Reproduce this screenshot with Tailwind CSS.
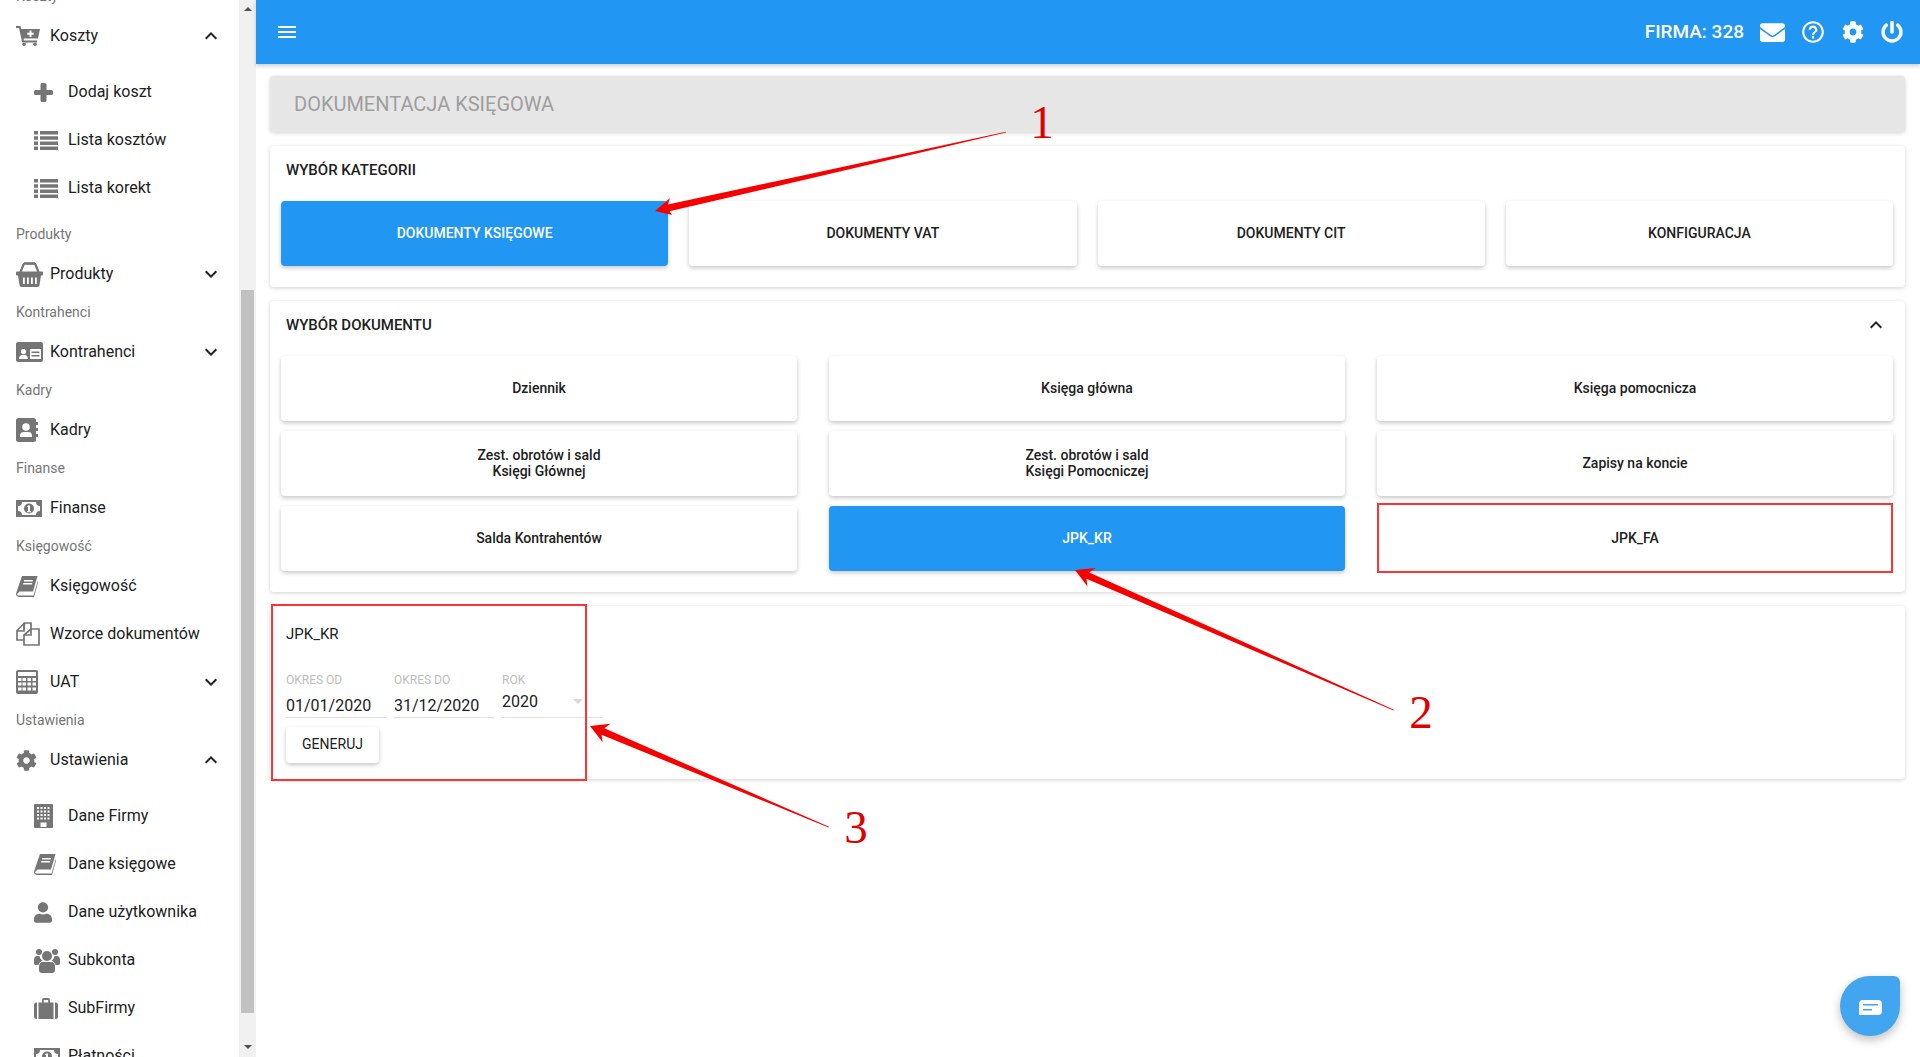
<!DOCTYPE html>
<html lang="pl">
<head>
<meta charset="UTF-8">
<meta name="viewport" content="width=device-width, initial-scale=1.0">
<title>Dokumentacja księgowa</title>
<script src="https://cdn.jsdelivr.net/npm/@tailwindcss/browser@4"></script>
</head>
<body class="relative h-[1057px] overflow-hidden bg-white font-['Roboto',sans-serif] text-[#212121]">
<div class="flex h-[1057px]">

  <!-- sidebar -->
  <aside class="flex w-[256px] shrink-0">
    <nav class="w-[239px] shrink-0 overflow-hidden bg-white text-base text-[#212121]">
      <div class="-mt-[19px]">
        <div class="flex h-[30px] items-center pl-4 text-sm text-[#757575]">Koszty</div>

        <div class="flex h-12 items-center pl-4 pt-[2px]">
          <span class="flex w-[34px] shrink-0"><svg width="24" height="20" viewBox="0 0 24 20" fill="#757575"><path d="M0 0h4.500l.8 3H24l-2 9.500H7.500l.4 2H21v2H6.200L3 2H0z"/><circle cx="8" cy="18.200" r="1.800"/><circle cx="19" cy="18.200" r="1.800"/><path fill="#fff" d="M13.500 4.500h2v2.200h2.200v2h-2.200v2.200h-2V8.700h-2.200v-2h2.200z"/></svg></span>
          <span>Koszty</span>
          <svg class="ml-auto mr-4" width="24" height="24" viewBox="0 0 24 24" fill="#212121"><path d="M12 8l-6 6 1.410 1.410L12 10.830l4.590 4.580L18 14z"/></svg>
        </div>
        <div class="py-2">
          <div class="flex h-12 items-center pl-[34px] pt-[2px]">
            <span class="flex w-[34px] shrink-0"><svg width="19" height="19" viewBox="0 0 19 19" fill="#757575"><path d="M8 0h3a1.500 1.500 0 0 1 1.500 1.500v5.500H17.500A1.500 1.500 0 0 1 19 8.500v2a1.500 1.500 0 0 1-1.500 1.500H12.500v5.500A1.500 1.500 0 0 1 11 19H8a1.500 1.500 0 0 1-1.500-1.500V12H1.500A1.500 1.500 0 0 1 0 10.500v-2A1.500 1.500 0 0 1 1.500 7H6.500V1.500A1.500 1.500 0 0 1 8 0z"/></svg></span>
            <span>Dodaj koszt</span>
          </div>
          <div class="flex h-12 items-center pl-[34px] pt-[2px]">
            <span class="flex w-[34px] shrink-0"><svg width="24" height="19" viewBox="0 0 24 19" fill="#757575"><path d="M0 0h4v3.500H0zM6 0h18v3.500H6zM0 5.200h4v3.500H0zM6 5.200h18v3.500H6zM0 10.400h4v3.500H0zM6 10.400h18v3.500H6zM0 15.500h4V19H0zM6 15.500h18V19H6z"/></svg></span>
            <span>Lista kosztów</span>
          </div>
          <div class="flex h-12 items-center pl-[34px] pt-[2px]">
            <span class="flex w-[34px] shrink-0"><svg width="24" height="19" viewBox="0 0 24 19" fill="#757575"><path d="M0 0h4v3.500H0zM6 0h18v3.500H6zM0 5.200h4v3.500H0zM6 5.200h18v3.500H6zM0 10.400h4v3.500H0zM6 10.400h18v3.500H6zM0 15.500h4V19H0zM6 15.500h18V19H6z"/></svg></span>
            <span>Lista korekt</span>
          </div>
        </div>

        <div class="flex h-[30px] items-center pl-4 text-sm text-[#757575]">Produkty</div>
        <div class="flex h-12 items-center pl-4 pt-[2px]">
          <span class="flex w-[34px] shrink-0"><svg width="27" height="25" viewBox="0 0 27 25" fill="#757575"><path d="M4.500 10l3-7.500a1.500 1.500 0 0 1 1.500-1h9a1.500 1.500 0 0 1 1.500 1l3 7.500" fill="none" stroke="#757575" stroke-width="2.200"/><path d="M8 .3h11v2.400H8z"/><path d="M1 9.500h25a1 1 0 0 1 1 1v2a1 1 0 0 1-1 1H1a1 1 0 0 1-1-1v-2a1 1 0 0 1 1-1zM2 13.500h23L23.500 23a2 2 0 0 1-2 2h-16a2 2 0 0 1-2-2z"/><path fill="#fff" d="M7 15.500h1.800V22H7zM11 15.500h1.800V22H11zM15 15.500h1.800V22H15zM19 15.500h1.800V22H19z"/></svg></span>
          <span>Produkty</span>
          <svg class="ml-auto mr-4" width="24" height="24" viewBox="0 0 24 24" fill="#212121"><path d="M16.590 8.590L12 13.170 7.410 8.590 6 10l6 6 6-6z"/></svg>
        </div>

        <div class="flex h-[30px] items-center pl-4 text-sm text-[#757575]">Kontrahenci</div>
        <div class="flex h-12 items-center pl-4 pt-[2px]">
          <span class="flex w-[34px] shrink-0"><svg width="27" height="20" viewBox="0 0 27 20"><rect width="27" height="20" rx="2" fill="#757575"/><circle cx="7.500" cy="9.500" r="2.600" fill="#fff"/><path d="M3 17c0-3 2-4.300 4.500-4.300S12 14 12 17z" fill="#fff"/><path d="M14 7h11v10H14z" fill="#fff"/><path d="M15.500 9.500h8v1.500h-8zM15.500 13h8v1.500h-8z" fill="#757575"/></svg></span>
          <span>Kontrahenci</span>
          <svg class="ml-auto mr-4" width="24" height="24" viewBox="0 0 24 24" fill="#212121"><path d="M16.590 8.590L12 13.170 7.410 8.590 6 10l6 6 6-6z"/></svg>
        </div>

        <div class="flex h-[30px] items-center pl-4 text-sm text-[#757575]">Kadry</div>
        <div class="flex h-12 items-center pl-4 pt-[2px]">
          <span class="flex w-[34px] shrink-0"><svg width="22" height="24" viewBox="0 0 22 24"><rect width="20" height="24" rx="2.500" fill="#757575"/><path d="M20 4h2v3h-2zM20 10h2v3h-2zM20 16h2v3h-2z" fill="#757575"/><circle cx="10" cy="9" r="3.800" fill="#fff"/><path d="M4 19v-1.500C4 15 6 14 7.500 14h5c1.500 0 3.500 1 3.500 3.500V19z" fill="#fff"/></svg></span>
          <span>Kadry</span>
        </div>

        <div class="flex h-[30px] items-center pl-4 text-sm text-[#757575]">Finanse</div>
        <div class="flex h-12 items-center pl-4 pt-[2px]">
          <span class="flex w-[34px] shrink-0"><svg width="26" height="17" viewBox="0 0 26 17"><rect width="26" height="17" fill="#757575"/><path d="M6 2h14a4 4 0 0 0 4 4v5a4 4 0 0 0-4 4H6a4 4 0 0 0-4-4V6a4 4 0 0 0 4-4z" fill="#fff"/><circle cx="13" cy="8.500" r="5" fill="#757575"/><path d="M12 5.500h2V11h1v1.300h-4V11h1V7h-1z" fill="#fff"/></svg></span>
          <span>Finanse</span>
        </div>

        <div class="flex h-[30px] items-center pl-4 text-sm text-[#757575]">Księgowość</div>
        <div class="flex h-12 items-center pl-4 pt-[2px]">
          <span class="flex w-[34px] shrink-0"><svg width="22" height="21" viewBox="0 0 22 21"><path d="M6 0h15.500L17 15.500H3.500L1 18a2 2 0 0 0 2 1.500h14.500l4.500-15v2L18 21H3.500C1 21-.5 19 .2 17z" fill="#757575"/><path d="M8 4h9v1.500H8zM7.200 7h9v1.500h-9z" fill="#fff"/></svg></span>
          <span>Księgowość</span>
        </div>
        <div class="flex h-12 items-center pl-4 pt-[2px]">
          <span class="flex w-[34px] shrink-0"><svg width="24" height="24" viewBox="0 0 24 24" fill="none" stroke="#757575" stroke-width="1.700"><path d="M8 7.500L8.500 1H15v6"/><path d="M8.500 1L1 8.500V18h7"/><path d="M1 9h7V2"/><path d="M15 7h8v16H8V13z"/><path d="M8 13h7V7"/></svg></span>
          <span>Wzorce dokumentów</span>
        </div>
        <div class="flex h-12 items-center pl-4 pt-[2px]">
          <span class="flex w-[34px] shrink-0"><svg width="22" height="24" viewBox="0 0 22 24"><rect width="22" height="24" rx="2" fill="#757575"/><path d="M2 2h18v4H2z" fill="#fff"/><path d="M2 8h3.500v3H2zM6.500 8H10v3H6.500zM11.500 8H15v3h-3.500zM16.500 8H20v3h-3.500zM2 12.500h3.500v3H2zM6.500 12.500H10v3H6.500zM11.500 12.500H15v3h-3.500zM16.500 12.500H20v3h-3.500zM2 17.500h3.500v3H2zM6.500 17.500H10v3H6.500zM11.500 17.500H15v3h-3.500zM16.500 17.500H20v3h-3.500z" fill="#fff"/></svg></span>
          <span>UAT</span>
          <svg class="ml-auto mr-4" width="24" height="24" viewBox="0 0 24 24" fill="#212121"><path d="M16.590 8.590L12 13.170 7.410 8.590 6 10l6 6 6-6z"/></svg>
        </div>

        <div class="flex h-[30px] items-center pl-4 text-sm text-[#757575]">Ustawienia</div>
        <div class="flex h-12 items-center pl-4 pt-[2px]">
          <span class="flex w-[34px] shrink-0"><svg width="21" height="21" viewBox="0 0 512 512" fill="#757575"><path d="M487.400 315.700l-42.600-24.600c4.300-23.200 4.300-47 0-70.200l42.600-24.600c4.900-2.800 7.100-8.600 5.500-14-11.100-35.600-30-67.800-54.700-94.600-3.800-4.100-10-5.100-14.800-2.300L380.800 110c-17.900-15.400-38.500-27.300-60.800-35.100V25.800c0-5.600-3.900-10.500-9.400-11.700-36.700-8.200-74.300-7.800-109.200 0-5.500 1.200-9.400 6.100-9.400 11.700V75c-22.200 7.900-42.800 19.800-60.800 35.100L88.700 85.500c-4.900-2.800-11-1.900-14.800 2.300-24.700 26.700-43.600 58.900-54.700 94.600-1.700 5.400.6 11.200 5.500 14L67.300 221c-4.300 23.200-4.300 47 0 70.200l-42.600 24.600c-4.900 2.800-7.100 8.600-5.500 14 11.100 35.600 30 67.800 54.700 94.600 3.800 4.100 10 5.100 14.800 2.300l42.600-24.600c17.900 15.400 38.500 27.300 60.800 35.100v49.200c0 5.600 3.900 10.500 9.400 11.700 36.700 8.200 74.300 7.800 109.200 0 5.500-1.200 9.400-6.100 9.400-11.700v-49.200c22.200-7.900 42.800-19.800 60.800-35.100l42.600 24.600c4.900 2.800 11 1.900 14.800-2.300 24.700-26.700 43.600-58.900 54.700-94.600 1.500-5.500-.7-11.300-5.600-14.100zM256 336c-44.100 0-80-35.900-80-80s35.900-80 80-80 80 35.900 80 80-35.900 80-80 80z"/></svg></span>
          <span>Ustawienia</span>
          <svg class="ml-auto mr-4" width="24" height="24" viewBox="0 0 24 24" fill="#212121"><path d="M12 8l-6 6 1.410 1.410L12 10.830l4.590 4.580L18 14z"/></svg>
        </div>
        <div class="py-2">
          <div class="flex h-12 items-center pl-[34px] pt-[2px]">
            <span class="flex w-[34px] shrink-0"><svg width="19" height="24" viewBox="0 0 19 24"><rect width="19" height="24" rx="1" fill="#757575"/><path d="M3 3h2v2H3zM6.500 3h2v2h-2zM10 3h2v2h-2zM13.500 3h2v2h-2zM3 6.500h2v2H3zM6.500 6.500h2v2h-2zM10 6.500h2v2h-2zM13.500 6.500h2v2h-2zM3 10h2v2H3zM6.500 10h2v2h-2zM10 10h2v2h-2zM13.500 10h2v2h-2zM3 13.500h2v2H3zM6.500 13.500h2v2h-2zM10 13.500h2v2h-2zM13.500 13.500h2v2h-2zM6.500 18.500h6V23h-6z" fill="#fff"/></svg></span>
            <span>Dane Firmy</span>
          </div>
          <div class="flex h-12 items-center pl-[34px] pt-[2px]">
            <span class="flex w-[34px] shrink-0"><svg width="22" height="21" viewBox="0 0 22 21"><path d="M6 0h15.500L17 15.500H3.500L1 18a2 2 0 0 0 2 1.500h14.500l4.500-15v2L18 21H3.500C1 21-.5 19 .2 17z" fill="#757575"/><path d="M8 4h9v1.500H8zM7.200 7h9v1.500h-9z" fill="#fff"/></svg></span>
            <span>Dane księgowe</span>
          </div>
          <div class="flex h-12 items-center pl-[34px] pt-[2px]">
            <span class="flex w-[34px] shrink-0"><svg width="18" height="21" viewBox="0 0 448 512" fill="#757575"><path d="M224 256c70.700 0 128-57.300 128-128S294.700 0 224 0 96 57.300 96 128s57.300 128 128 128zm89.600 32h-16.700c-22.200 10.200-46.900 16-72.900 16s-50.600-5.800-72.900-16h-16.700C60.200 288 0 348.200 0 422.400V464c0 26.500 21.500 48 48 48h352c26.500 0 48-21.500 48-48v-41.600c0-74.200-60.200-134.400-134.400-134.400z"/></svg></span>
            <span>Dane użytkownika</span>
          </div>
          <div class="flex h-12 items-center pl-[34px] pt-[2px]">
            <span class="flex w-[34px] shrink-0"><svg width="26" height="25" viewBox="0 0 26 25" fill="#757575"><circle cx="5" cy="4" r="3"/><circle cx="21" cy="4" r="3"/><circle cx="13" cy="8" r="5"/><path d="M0 12c0-2 1-4 3-4h2.500c.4 2 1.500 3.500 3 4.500C6.500 13.500 5 15 4.500 17H1.500C.5 17 0 16 0 15zM26 12c0-2-1-4-3-4h-2.500c-.4 2-1.500 3.500-3 4.500 2 1 3.500 2.500 4 4.500h3c1 0 1.500-1 1.500-2zM9 14h8c2.500 0 4 2 4 4.500V22a3 3 0 0 1-3 3H8a3 3 0 0 1-3-3v-3.500C5 16 6.500 14 9 14z"/></svg></span>
            <span>Subkonta</span>
          </div>
          <div class="flex h-12 items-center pl-[34px] pt-[2px]">
            <span class="flex w-[34px] shrink-0"><svg width="24" height="21" viewBox="0 0 24 21" fill="#757575"><path d="M0 7a2.500 2.500 0 0 1 2.500-2.500H3V21h-.5A2.500 2.500 0 0 1 0 18.500zM24 7a2.500 2.500 0 0 0-2.500-2.500H21V21h.5a2.500 2.500 0 0 0 2.500-2.500zM8 4.500V2a2 2 0 0 1 2-2h4a2 2 0 0 1 2 2v2.500h3.500V21h-15V4.500zM9.800 4.500h4.400V2H9.800z"/></svg></span>
            <span>SubFirmy</span>
          </div>
          <div class="flex h-12 items-center pl-[34px] pt-[2px]">
            <span class="flex w-[34px] shrink-0"><svg width="26" height="17" viewBox="0 0 26 17"><rect width="26" height="17" fill="#757575"/><path d="M6 2h14a4 4 0 0 0 4 4v5a4 4 0 0 0-4 4H6a4 4 0 0 0-4-4V6a4 4 0 0 0 4-4z" fill="#fff"/><circle cx="13" cy="8.500" r="5" fill="#757575"/><path d="M12 5.500h2V11h1v1.300h-4V11h1V7h-1z" fill="#fff"/></svg></span>
            <span>Płatności</span>
          </div>
        </div>
      </div>
    </nav>

    <!-- scrollbar -->
    <div class="flex w-[17px] shrink-0 flex-col items-center bg-[#f1f1f1]">
      <svg class="mt-[7px]" width="8" height="4" viewBox="0 0 8 4" fill="#505050"><path d="M0 4l4-4 4 4z"/></svg>
      <div class="mt-[279px] h-[723px] w-[13px] bg-[#c1c1c1]"></div>
      <svg class="mt-[32px]" width="8" height="4" viewBox="0 0 8 4" fill="#505050"><path d="M0 0l4 4 4-4z"/></svg>
    </div>
  </aside>

  <!-- main -->
  <div class="flex min-w-0 flex-1 flex-col bg-white">
    <header class="z-10 flex h-16 shrink-0 items-center bg-[#2196f3] pl-[19px] pr-[17px] text-white shadow-[0_2px_4px_rgba(0,0,0,0.2)]">
      <svg width="24" height="24" viewBox="0 0 24 24" fill="#fff"><path d="M3 18h18v-2H3v2zm0-5h18v-2H3v2zm0-7v2h18V6H3z"/></svg>
      <span class="ml-auto text-[19px] font-medium">FIRMA: 328</span>
      <svg class="ml-[16px]" width="25" height="25" viewBox="0 0 512 512" fill="#fff"><path d="M502.300 190.800c3.900-3.100 9.700-.2 9.700 4.700V400c0 26.500-21.500 48-48 48H48c-26.500 0-48-21.500-48-48V195.600c0-5 5.700-7.800 9.700-4.700 22.400 17.400 52.100 39.500 154.100 113.600 21.100 15.400 56.700 47.800 92.200 47.600 35.700.3 72-32.800 92.300-47.600 102-74.100 131.600-96.300 154-113.700zM256 320c23.200.4 56.600-29.200 73.400-41.400 132.700-96.300 142.800-104.700 173.400-128.700 5.800-4.500 9.200-11.500 9.200-18.900v-19c0-26.500-21.500-48-48-48H48C21.500 64 0 85.500 0 112v19c0 7.400 3.400 14.300 9.200 18.900 30.600 23.900 40.700 32.400 173.400 128.700 16.800 12.200 50.200 41.800 73.400 41.400z"/></svg>
      <svg class="ml-[15px]" width="26" height="26" viewBox="0 0 24 24" fill="#fff"><path d="M11 18h2v-2h-2v2zm1-16C6.480 2 2 6.480 2 12s4.480 10 10 10 10-4.480 10-10S17.520 2 12 2zm0 18c-4.410 0-8-3.590-8-8s3.590-8 8-8 8 3.590 8 8-3.590 8-8 8zm0-14c-2.210 0-4 1.790-4 4h2c0-1.100.9-2 2-2s2 .9 2 2c0 2-3 1.750-3 5h2c0-2.250 3-2.500 3-5 0-2.210-1.790-4-4-4z"/></svg>
      <svg class="ml-[16px]" width="22" height="22" viewBox="0 0 512 512" fill="#fff"><path d="M487.400 315.700l-42.600-24.600c4.300-23.200 4.300-47 0-70.200l42.600-24.600c4.900-2.800 7.100-8.600 5.500-14-11.100-35.600-30-67.800-54.700-94.600-3.800-4.100-10-5.100-14.800-2.300L380.800 110c-17.900-15.400-38.500-27.300-60.800-35.100V25.800c0-5.600-3.900-10.500-9.400-11.700-36.700-8.200-74.300-7.800-109.200 0-5.500 1.200-9.400 6.100-9.400 11.700V75c-22.200 7.900-42.800 19.800-60.800 35.100L88.700 85.500c-4.900-2.800-11-1.900-14.800 2.300-24.700 26.700-43.600 58.900-54.700 94.600-1.700 5.400.6 11.200 5.500 14L67.300 221c-4.300 23.200-4.300 47 0 70.200l-42.600 24.600c-4.900 2.800-7.100 8.600-5.500 14 11.100 35.600 30 67.800 54.700 94.600 3.800 4.100 10 5.100 14.800 2.300l42.600-24.600c17.900 15.400 38.500 27.300 60.800 35.100v49.200c0 5.600 3.900 10.500 9.400 11.700 36.700 8.200 74.300 7.800 109.200 0 5.500-1.200 9.400-6.100 9.400-11.700v-49.200c22.200-7.900 42.800-19.800 60.800-35.100l42.600 24.600c4.900 2.800 11 1.900 14.800-2.300 24.700-26.700 43.600-58.900 54.700-94.600 1.500-5.500-.7-11.300-5.600-14.100zM256 336c-44.100 0-80-35.900-80-80s35.900-80 80-80 80 35.900 80 80-35.900 80-80 80z"/></svg>
      <svg class="ml-[17px]" width="22" height="24" viewBox="0 0 512 512" fill="#fff"><path d="M400 54.100c63 45 104 118.600 104 201.900 0 136.800-110.800 247.700-247.500 248C120 504.300 8.200 393 8 256.400 7.900 173.100 48.900 99.300 111.800 54.200c11.700-8.300 28-4.800 35 7.700L162.600 90c5.900 10.500 3.100 23.800-6.600 31-41.500 30.800-68 79.600-68 134.900-.1 92.300 74.500 168.100 168 168.100 91.600 0 168.600-74.200 168-169.100-.3-51.800-24.700-101.800-68.100-134-9.700-7.200-12.400-20.500-6.500-30.900l15.800-28.100c7-12.400 23.200-16.100 34.800-7.800zM296 264V24c0-13.300-10.700-24-24-24h-32c-13.300 0-24 10.700-24 24v240c0 13.300 10.700 24 24 24h32c13.300 0 24-10.700 24-24z"/></svg>
    </header>

    <main class="flex flex-col gap-[14px] pl-[14px] pr-[15px] pt-3">
      <div class="flex h-14 items-center rounded bg-[#e6e6e6] pl-6 text-xl text-[#9e9e9e] shadow-[0_1px_4px_rgba(0,0,0,0.18)]">DOKUMENTACJA KSIĘGOWA</div>

      <section class="rounded bg-white pb-[21px] shadow-[0_1px_4px_rgba(0,0,0,0.18)]">
        <div class="flex h-[55px] items-center pb-[6px] pl-4 text-[15px] font-medium">WYBÓR KATEGORII</div>
        <div class="grid grid-cols-4 gap-x-[21px] pl-[11px] pr-3 text-sm font-medium">
          <div class="flex h-[65px] items-center justify-center rounded bg-[#2196f3] pb-px text-white shadow-[0_2px_4px_rgba(0,0,0,0.22)]">DOKUMENTY KSIĘGOWE</div>
          <div class="flex h-[65px] items-center justify-center rounded bg-white pb-px shadow-[0_2px_4px_rgba(0,0,0,0.22)]">DOKUMENTY VAT</div>
          <div class="flex h-[65px] items-center justify-center rounded bg-white pb-px shadow-[0_2px_4px_rgba(0,0,0,0.22)]">DOKUMENTY CIT</div>
          <div class="flex h-[65px] items-center justify-center rounded bg-white pb-px shadow-[0_2px_4px_rgba(0,0,0,0.22)]">KONFIGURACJA</div>
        </div>
      </section>

      <section class="rounded bg-white pb-[21px] shadow-[0_1px_4px_rgba(0,0,0,0.18)]">
        <div class="flex h-[55px] items-center justify-between pb-[7px] pl-4 pr-[17px] text-[15px] font-medium">
          <span>WYBÓR DOKUMENTU</span>
          <svg width="24" height="24" viewBox="0 0 24 24" fill="#212121"><path d="M12 8l-6 6 1.410 1.410L12 10.830l4.590 4.580L18 14z"/></svg>
        </div>
        <div class="grid grid-cols-3 gap-x-8 gap-y-[10px] pl-[11px] pr-3 text-center text-sm font-medium leading-4">
          <div class="flex h-[65px] items-center justify-center rounded bg-white pb-[2px] shadow-[0_2px_4px_rgba(0,0,0,0.22)]">Dziennik</div>
          <div class="flex h-[65px] items-center justify-center rounded bg-white pb-[2px] shadow-[0_2px_4px_rgba(0,0,0,0.22)]">Księga główna</div>
          <div class="flex h-[65px] items-center justify-center rounded bg-white pb-[2px] shadow-[0_2px_4px_rgba(0,0,0,0.22)]">Księga pomocnicza</div>
          <div class="flex h-[65px] items-center justify-center rounded bg-white pb-[2px] shadow-[0_2px_4px_rgba(0,0,0,0.22)]">Zest. obrotów i sald<br>Księgi Głównej</div>
          <div class="flex h-[65px] items-center justify-center rounded bg-white pb-[2px] shadow-[0_2px_4px_rgba(0,0,0,0.22)]">Zest. obrotów i sald<br>Księgi Pomocniczej</div>
          <div class="flex h-[65px] items-center justify-center rounded bg-white pb-[2px] shadow-[0_2px_4px_rgba(0,0,0,0.22)]">Zapisy na koncie</div>
          <div class="flex h-[65px] items-center justify-center rounded bg-white pb-[2px] shadow-[0_2px_4px_rgba(0,0,0,0.22)]">Salda Kontrahentów</div>
          <div class="flex h-[65px] items-center justify-center rounded bg-[#2196f3] pb-[2px] text-white shadow-[0_2px_4px_rgba(0,0,0,0.22)]">JPK_KR</div>
          <div class="relative flex h-[65px] items-center justify-center rounded bg-white pb-[2px]">
            JPK_FA
            <div class="absolute -bottom-[2px] -top-[3px] inset-x-0 border-2 border-[#ff3333]"></div>
          </div>
        </div>
      </section>

      <section class="relative h-[173px] rounded bg-white pl-4 shadow-[0_1px_4px_rgba(0,0,0,0.18)]">
        <div class="flex h-[55px] items-center pt-[2px] text-[15px]">JPK_KR</div>
        <div class="mt-[10px] flex gap-2">
          <div class="w-[100px]">
            <div class="h-[18px] text-xs leading-[18px] text-[#bdbdbd]">OKRES OD</div>
            <div class="h-[29px] border-b border-[#e0e0e0] pt-[7px] text-base leading-[20px]">01/01/2020</div>
          </div>
          <div class="w-[100px]">
            <div class="h-[18px] text-xs leading-[18px] text-[#bdbdbd]">OKRES DO</div>
            <div class="h-[29px] border-b border-[#e0e0e0] pt-[7px] text-base leading-[20px]">31/12/2020</div>
          </div>
          <div class="w-[100px]">
            <div class="h-[18px] text-xs leading-[18px] text-[#bdbdbd]">ROK</div>
            <div class="flex h-[29px] items-start justify-between border-b border-[#e0e0e0] pt-[3px] text-base leading-[20px]">
              <span>2020</span>
              <svg class="mr-[19px] mt-[7px]" width="10" height="5" viewBox="0 0 10 5" fill="#d9d9d9"><path d="M0 0h10L5 5z"/></svg>
            </div>
          </div>
        </div>
        <div class="mt-[9px] flex h-9 w-[93px] items-center justify-center rounded bg-white pb-[2px] text-sm shadow-[0_2px_4px_rgba(0,0,0,0.22)]">GENERUJ</div>
        <div class="absolute -bottom-[2px] -top-[2px] left-px w-[316px] border-2 border-[#ff3333]"></div>
      </section>
    </main>
  </div>
</div>

<!-- chat bubble -->
<div class="absolute left-[1840px] top-[976px] flex h-[60px] w-[60px] items-center justify-center rounded-[30px_6px_30px_30px] bg-[#42a5f0] shadow-[0_4px_10px_rgba(0,0,0,0.25)]">
  <svg class="mt-[2px]" width="23" height="15" viewBox="0 0 23 15"><path d="M4 0h15a4 4 0 0 1 4 4v7a4 4 0 0 1-4 4H0V4a4 4 0 0 1 4-4z" fill="#fff"/><path d="M4 4h15v1.500H4zM4 9h9v1.500H4z" fill="#42a5f0"/></svg>
</div>

<!-- annotations: arrows and numbers drawn over the screenshot -->
<svg class="pointer-events-none absolute left-0 top-0" width="1920" height="1057" viewBox="0 0 1920 1057">
  <g fill="#f60000">
    <path d="M655 211L670 198L667.900 204.500L1006 131.800L1006 132.600L669.500 211.300L672 215z"/>
    <path d="M1075 570L1095.500 568L1089.200 572.400L1394 709.800L1393.500 710.500L1086.400 578.800L1087.500 586.500z"/>
    <path d="M590 726L610.500 723.800L604.300 728.300L829 826.800L828.500 827.500L601.500 734.700L602.700 742.200z"/>
  </g>
  <g fill="#e00000" font-family="'Liberation Serif',serif" font-size="47" text-anchor="middle">
    <text x="1042" y="138">1</text>
    <text x="1421" y="728">2</text>
    <text x="856" y="843">3</text>
  </g>
</svg>
</body>
</html>
